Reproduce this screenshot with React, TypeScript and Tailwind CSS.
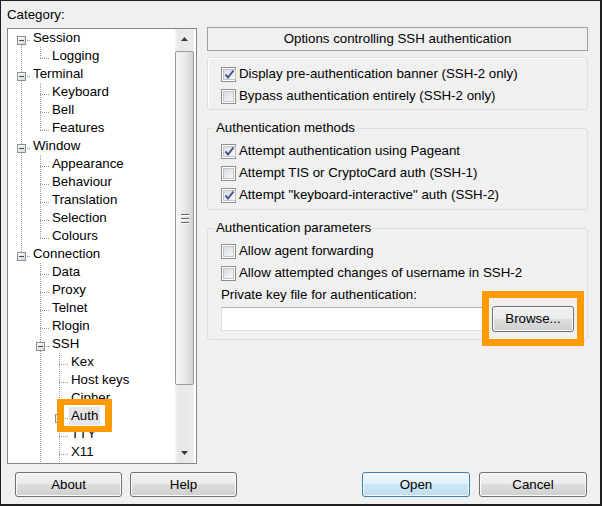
import React from 'react';

type Item = { t: string; l: number; e?: '-' | '+' };

const items: Item[] = [
  { t: 'Session', l: 0, e: '-' },
  { t: 'Logging', l: 1 },
  { t: 'Terminal', l: 0, e: '-' },
  { t: 'Keyboard', l: 1 },
  { t: 'Bell', l: 1 },
  { t: 'Features', l: 1 },
  { t: 'Window', l: 0, e: '-' },
  { t: 'Appearance', l: 1 },
  { t: 'Behaviour', l: 1 },
  { t: 'Translation', l: 1 },
  { t: 'Selection', l: 1 },
  { t: 'Colours', l: 1 },
  { t: 'Connection', l: 0, e: '-' },
  { t: 'Data', l: 1 },
  { t: 'Proxy', l: 1 },
  { t: 'Telnet', l: 1 },
  { t: 'Rlogin', l: 1 },
  { t: 'SSH', l: 1, e: '-' },
  { t: 'Kex', l: 2 },
  { t: 'Host keys', l: 2 },
  { t: 'Cipher', l: 2 },
  { t: 'Auth', l: 2, e: '+' },
  { t: 'TTY', l: 2 },
  { t: 'X11', l: 2 },
  { t: 'Tunnels', l: 2 },
  { t: 'Bugs', l: 2 },
  { t: 'More bugs', l: 2 },
  { t: 'Serial', l: 1 },
];

const VISIBLE = 24;

function hasNext(i: number): boolean {
  if (i < 0) return false;
  const L = items[i].l;
  for (let j = i + 1; j < items.length; j++) {
    if (items[j].l < L) return false;
    if (items[j].l === L) return true;
  }
  return false;
}

function ancestor(i: number, k: number): number {
  for (let j = i - 1; j >= 0; j--) if (items[j].l === k) return j;
  return -1;
}

const DOT = '#9a9a9a';

function Connectors({ i }: { i: number }) {
  const it = items[i];
  const L = it.l;
  const w = 23 + 19 * L;
  const xs = (k: number) => 13.5 + 19 * k;
  const cy = 11.5;
  const lines: React.ReactNode[] = [];
  for (let k = 0; k < L; k++) {
    if (hasNext(ancestor(i, k))) {
      lines.push(<line key={'a' + k} x1={xs(k)} y1={0} x2={xs(k)} y2={18} stroke={DOT} strokeDasharray="1 1" />);
    }
  }
  const next = hasNext(i);
  if (i > 0 && next) {
    lines.push(<line key="full" x1={xs(L)} y1={0} x2={xs(L)} y2={18} stroke={DOT} strokeDasharray="1 1" />);
  } else if (i > 0) {
    lines.push(<line key="top" x1={xs(L)} y1={0} x2={xs(L)} y2={12} stroke={DOT} strokeDasharray="1 1" />);
  } else if (next) {
    lines.push(<line key="bot" x1={xs(L)} y1={12} x2={xs(L)} y2={18} stroke={DOT} strokeDasharray="1 1" />);
  }
  lines.push(<line key="h" x1={13 + 19 * L} y1={cy} x2={w} y2={cy} stroke={DOT} strokeDasharray="1 1" />);
  return (
    <svg width={w} height={18} className="shrink-0" shapeRendering="crispEdges">
      <defs>
        <linearGradient id={'eg' + i} x1="0" y1="0" x2="1" y2="1">
          <stop offset="0" stopColor="#ffffff" />
          <stop offset="1" stopColor="#d4d4d4" />
        </linearGradient>
      </defs>
      {lines}
      {it.e && (
        <g>
          <rect x={xs(L) - 4} y={7.5} width={8} height={8} fill={`url(#eg${i})`} stroke="#8e8f8f" />
          <line x1={xs(L) - 2.5} y1={cy} x2={xs(L) + 2.5} y2={cy} stroke="#2d4b7a" />
          {it.e === '+' && <line x1={xs(L)} y1={9} x2={xs(L)} y2={14} stroke="#2d4b7a" />}
        </g>
      )}
    </svg>
  );
}

function Scrollbar() {
  return (
    <div className="w-[19px] mr-[2px] shrink-0 flex flex-col bg-[linear-gradient(to_right,#f4f4f4,#e7e7e7_20%,#ececec)]">
      <div className="h-[20px] flex items-center justify-center">
        <svg width="7" height="4">
          <polygon points="3.5,0 7,4 0,4" fill="#3a3a3a" />
        </svg>
      </div>
      <div className="flex-1 flex flex-col">
        <div className="mt-[2px] h-[334px] rounded-[2px] border border-[#9b9b9b] bg-[linear-gradient(to_right,#f6f6f6,#ebebeb_45%,#d3d3d3)] flex flex-col items-center justify-center gap-[3px]">
          <div className="w-[8px] h-[1px] bg-[#5e5e5e] shadow-[0_1px_0_#ffffff]" />
          <div className="w-[8px] h-[1px] bg-[#5e5e5e] shadow-[0_1px_0_#ffffff]" />
          <div className="w-[8px] h-[1px] bg-[#5e5e5e] shadow-[0_1px_0_#ffffff]" />
        </div>
      </div>
      <div className="h-[20px] flex items-center justify-center">
        <svg width="7" height="4">
          <polygon points="0,0 7,0 3.5,4" fill="#3a3a3a" />
        </svg>
      </div>
    </div>
  );
}

function Checkbox({ checked }: { checked?: boolean }) {
  return (
    <span className="w-[15px] h-[15px] shrink-0 border border-[#8e8f8f] bg-white p-[1px] flex">
      <span className="flex-1 border border-[#c0c4c9] bg-[linear-gradient(135deg,#d8dce1,#f7f7f7)] flex items-center justify-center">
        {checked && (
          <svg width="11" height="11" viewBox="0 0 11 11" className="shrink-0">
            <path d="M1.5 5.5 L4 8.5 L9.5 1.5" fill="none" stroke="#3b4f8c" strokeWidth="1.9" />
          </svg>
        )}
      </span>
    </span>
  );
}

function CheckRow({ checked, label }: { checked?: boolean; label: string }) {
  return (
    <div className="h-[22px] flex items-center">
      <Checkbox checked={checked} />
      <span className="ml-[3px] leading-[16px] whitespace-nowrap">{label}</span>
    </div>
  );
}

function Button({ label, w, primary }: { label: string; w: string; primary?: boolean }) {
  const base = 'rounded-[3px] border flex items-center justify-center leading-[16px] shrink-0';
  const normal =
    'border-[#707070] bg-[linear-gradient(#f2f2f2_0%,#ebebeb_50%,#dddddd_50%,#cfcfcf_100%)] shadow-[inset_0_0_0_1px_#fbfbfb]';
  const prim =
    'border-[#3c7fb1] bg-[linear-gradient(#eef7fd_0%,#e1f0fa_50%,#cde6f5_50%,#c0def1_100%)] shadow-[inset_0_0_0_1px_#f4fbff]';
  return <div className={`${base} ${w} ${primary ? prim : normal}`}>{label}</div>;
}

export default function App() {
  return (
    <div className="relative w-[602px] h-[506px] bg-[#f0f0f0] border-t border-l border-r-2 border-b-2 border-[#1f1f1f] font-['Liberation_Sans',Arial,sans-serif] text-[13.3px] text-black flex flex-col">
      <div className="flex">
        <div className="ml-[6px] w-[190px] flex flex-col shrink-0">
          <div className="h-[27px] pt-[6px] leading-[16px]">Category:</div>
          <div className="h-[436px] border border-[#828790] bg-white flex overflow-hidden">
            <div className="flex-1 flex flex-col overflow-hidden">
              {items.slice(0, VISIBLE).map((it, i) => (
                <div key={i} className="h-[18px] shrink-0 flex items-stretch">
                  <Connectors i={i} />
                  <span
                    className={`px-[2px] leading-[18px] whitespace-nowrap ${
                      it.t === 'Auth' ? 'bg-[#e6e6e6]' : ''
                    }`}
                  >
                    {it.t}
                  </span>
                </div>
              ))}
              <svg width="80" height="2" className="shrink-0" shapeRendering="crispEdges">
                <line x1={32.5} y1={0} x2={32.5} y2={2} stroke={DOT} strokeDasharray="1 1" />
                <line x1={51.5} y1={0} x2={51.5} y2={2} stroke={DOT} strokeDasharray="1 1" />
              </svg>
            </div>
            <Scrollbar />
          </div>
        </div>

        <div className="ml-[10px] w-[381px] mt-[26px] flex flex-col shrink-0">
          <div className="h-[24px] border border-[#a0a0a0] flex items-center justify-center leading-[16px]">
            Options controlling SSH authentication
          </div>

          <div className="mt-[6px] border border-[#d5dfe5] rounded-[3px] pt-[5px] pb-[2px] px-[13px] shadow-[inset_1px_1px_0_#ffffff]">
            <CheckRow checked label="Display pre-authentication banner (SSH-2 only)" />
            <CheckRow label="Bypass authentication entirely (SSH-2 only)" />
          </div>

          <fieldset className="mt-[10px] border border-[#d5dfe5] rounded-[3px] min-w-0">
            <legend className="ml-[6px] px-[2px] leading-[16px]">Authentication methods</legend>
            <div className="pt-[4px] pb-[3px] px-[13px]">
              <CheckRow checked label="Attempt authentication using Pageant" />
              <CheckRow label="Attempt TIS or CryptoCard auth (SSH-1)" />
              <CheckRow checked label='Attempt "keyboard-interactive" auth (SSH-2)' />
            </div>
          </fieldset>

          <fieldset className="mt-[10px] border border-[#d5dfe5] rounded-[3px] min-w-0">
            <legend className="ml-[6px] px-[2px] leading-[16px]">Authentication parameters</legend>
            <div className="pt-[4px] pb-[7px] px-[13px]">
              <CheckRow label="Allow agent forwarding" />
              <CheckRow label="Allow attempted changes of username in SSH-2" />
              <div className="h-[22px] flex items-center leading-[16px]">Private key file for authentication:</div>
              <div className="h-[26px] flex items-center">
                <div className="w-[262px] h-[24px] bg-white border border-[#dbdfe6] border-t-[#abadb3]" />
                <div className="ml-[9px]">
                  <Button label="Browse..." w="w-[82px] h-[26px]" />
                </div>
              </div>
            </div>
          </fieldset>
        </div>
      </div>

      <div className="mt-[8px] flex pl-[14px] pr-[13px]">
        <Button label="About" w="w-[107px] h-[25px]" />
        <div className="ml-[8px]">
          <Button label="Help" w="w-[107px] h-[25px]" />
        </div>
        <div className="flex-1" />
        <Button label="Open" w="w-[108px] h-[25px]" primary />
        <div className="ml-[9px]">
          <Button label="Cancel" w="w-[108px] h-[25px]" />
        </div>
      </div>

      <div className="absolute left-[56px] top-[398px] w-[55px] h-[33px] border-x-[7px] border-y-[6px] border-[#ff9a00]" />
      <div className="absolute left-[481px] top-[290px] w-[102px] h-[55px] border-[7px] border-[#ff9a00]" />
    </div>
  );
}
